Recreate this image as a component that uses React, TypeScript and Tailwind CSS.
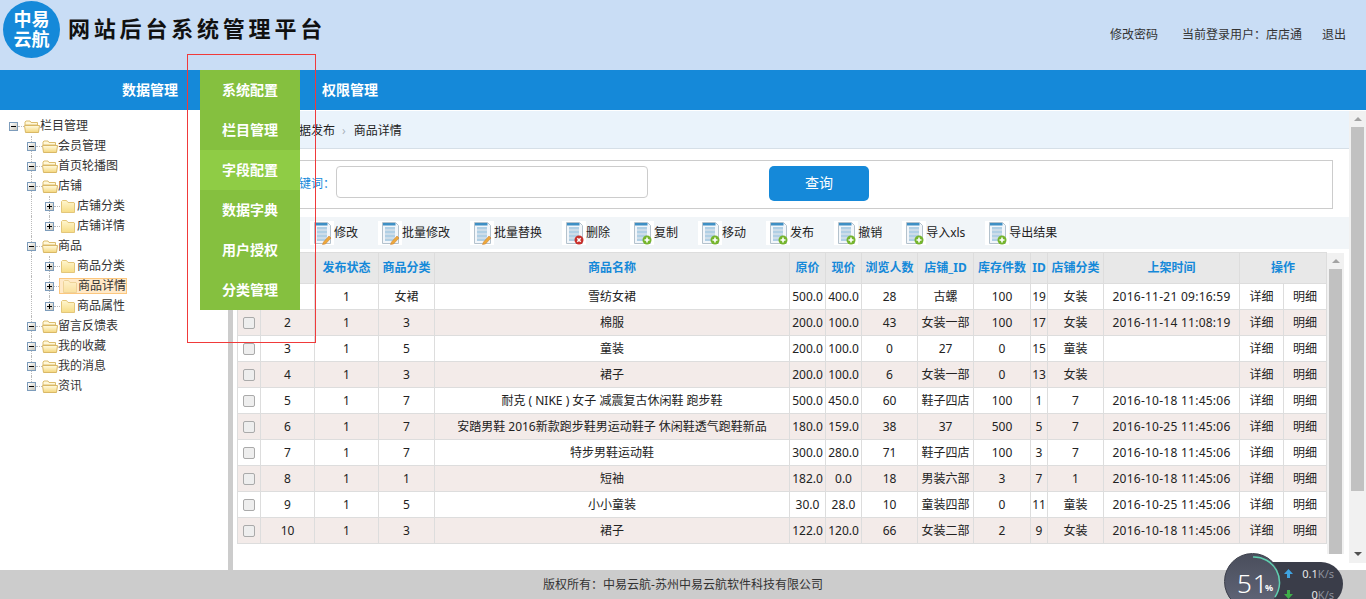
import React from "react";

const FONT = { fontFamily: '"Noto Sans", "Noto Sans CJK SC", sans-serif' };

interface ITreeNode {
  label: string;
  level: number;
  closed?: boolean;
  selected?: boolean;
  last?: boolean;
}

const tree: Array<ITreeNode> = [
  { label: "栏目管理", level: 0 },
  { label: "会员管理", level: 1 },
  { label: "首页轮播图", level: 1 },
  { label: "店铺", level: 1 },
  { label: "店铺分类", level: 2, closed: true },
  { label: "店铺详情", level: 2, closed: true, last: true },
  { label: "商品", level: 1 },
  { label: "商品分类", level: 2, closed: true },
  { label: "商品详情", level: 2, closed: true, selected: true },
  { label: "商品属性", level: 2, closed: true, last: true },
  { label: "留言反馈表", level: 1 },
  { label: "我的收藏", level: 1 },
  { label: "我的消息", level: 1 },
  { label: "资讯", level: 1, last: true },
];

const dropdown = ["系统配置", "栏目管理", "字段配置", "数据字典", "用户授权", "分类管理"];

const tools: Array<{ label: string; badge: "add" | "edit" | "del" }> = [
  { label: "新增", badge: "add" },
  { label: "修改", badge: "edit" },
  { label: "批量修改", badge: "edit" },
  { label: "批量替换", badge: "edit" },
  { label: "删除", badge: "del" },
  { label: "复制", badge: "add" },
  { label: "移动", badge: "add" },
  { label: "发布", badge: "add" },
  { label: "撤销", badge: "add" },
  { label: "导入xls", badge: "add" },
  { label: "导出结果", badge: "add" },
];

const headers = ["序号", "发布状态", "商品分类", "商品名称", "原价", "现价", "浏览人数", "店铺_ID", "库存件数", "ID", "店铺分类", "上架时间"];

const colWidths = ["w-[23px]", "w-[54px]", "w-[64px]", "w-[56px]", "w-[355px]", "w-[36px]", "w-[36px]", "w-[56px]", "w-[56px]", "w-[57px]", "w-[17px]", "w-[56px]", "w-[136px]", "w-[44px]", "w-[43px]"];

const rows = [
  ["1", "1", "女裙", "雪纺女裙", "500.0", "400.0", "28", "古螺", "100", "19", "女装", "2016-11-21 09:16:59"],
  ["2", "1", "3", "棉服", "200.0", "100.0", "43", "女装一部", "100", "17", "女装", "2016-11-14 11:08:19"],
  ["3", "1", "5", "童装", "200.0", "100.0", "0", "27", "0", "15", "童装", ""],
  ["4", "1", "3", "裙子", "200.0", "100.0", "6", "女装一部", "0", "13", "女装", ""],
  ["5", "1", "7", "耐克 ( NIKE ) 女子 减震复古休闲鞋 跑步鞋", "500.0", "450.0", "60", "鞋子四店", "100", "1", "7", "2016-10-18 11:45:06"],
  ["6", "1", "7", "安踏男鞋 2016新款跑步鞋男运动鞋子 休闲鞋透气跑鞋新品", "180.0", "159.0", "38", "37", "500", "5", "7", "2016-10-25 11:45:06"],
  ["7", "1", "7", "特步男鞋运动鞋", "300.0", "280.0", "71", "鞋子四店", "100", "3", "7", "2016-10-18 11:45:06"],
  ["8", "1", "1", "短袖", "182.0", "0.0", "18", "男装六部", "3", "7", "1", "2016-10-18 11:45:06"],
  ["9", "1", "5", "小小童装", "30.0", "28.0", "10", "童装四部", "0", "11", "童装", "2016-10-25 11:45:06"],
  ["10", "1", "3", "裙子", "122.0", "120.0", "66", "女装二部", "2", "9", "女装", "2016-10-18 11:45:06"],
];

const Toggle: React.FC<{ closed?: boolean }> = ({ closed }) => (
  <span className="relative flex size-[9px] shrink-0 items-center justify-center border border-[#7d9cbb] bg-gradient-to-br from-white to-[#c9c5b8]">
    <span className="h-px w-[5px] bg-black" />
    {closed && <span className="absolute h-[5px] w-px bg-black" />}
  </span>
);

const Folder: React.FC<{ closed?: boolean; pale?: boolean }> = ({ closed, pale }) =>
  closed ? (
    <svg width="14" height="13" viewBox="0 0 14 13" className={`shrink-0 ${pale ? "opacity-60" : ""}`}>
      <defs>
        <linearGradient id="fc" x1="0" y1="0" x2="0" y2="1">
          <stop offset="0" stopColor="#fff6cf" />
          <stop offset="1" stopColor="#f6dc85" />
        </linearGradient>
      </defs>
      <path d="M.5 12.5V1.5l1-1h4l1.5 2h6l.5.5v9.5z" fill="url(#fc)" stroke="#e3c67a" />
    </svg>
  ) : (
    <svg width="16" height="13" viewBox="0 0 16 13" className="shrink-0">
      <defs>
        <linearGradient id="fo" x1="0" y1="0" x2="0" y2="1">
          <stop offset="0" stopColor="#fffbe4" />
          <stop offset="1" stopColor="#f4d67a" />
        </linearGradient>
      </defs>
      <path d="M1 5V2l1-1h4l1 1.5h6.5V5z" fill="#fff8da" stroke="#dcbd6f" />
      <path d="M.5 5.5h15l-1 7h-13z" fill="url(#fo)" stroke="#d9b866" />
    </svg>
  );

const TreeRow: React.FC<ITreeNode> = ({ label, level, closed, selected, last }) => {
  const indent = level === 0 ? "pl-[9px]" : level === 1 ? "pl-[27px]" : "pl-[45px]";
  return (
    <div className={`relative flex h-5 items-center text-xs text-[#333] ${indent}`}>
      {level > 0 && (
        <span className={`absolute left-[31px] top-0 border-l border-dotted border-[#bbbbbb] ${level === 1 && last ? "h-[10px]" : "h-5"}`} />
      )}
      {level === 2 && (
        <span className={`absolute left-[49px] top-0 border-l border-dotted border-[#bbbbbb] ${last ? "h-[10px]" : "h-5"}`} />
      )}
      <span className="relative">
        <Toggle closed={closed} />
      </span>
      {selected ? (
        <>
          <span className="w-[5px] shrink-0 border-t border-dotted border-[#bbbbbb]" />
          <span className="flex h-4 items-center border border-[#fcc77f] bg-[#ffe9c8] pl-[3px]">
            <Folder closed pale />
            <span className="ml-px">{label}</span>
          </span>
        </>
      ) : (
        <>
          <span className="w-[6px] shrink-0 border-t border-dotted border-[#bbbbbb]" />
          <span className={`flex items-center ${closed ? "ml-px" : ""}`}>
            <Folder closed={closed} />
            <span className={closed ? "ml-[2px]" : ""}>{label}</span>
          </span>
        </>
      )}
    </div>
  );
};

const DocIcon: React.FC<{ badge: "add" | "edit" | "del" }> = ({ badge }) => (
  <svg width="24" height="24" viewBox="0 0 24 24" className="shrink-0 bg-white">
    <path d="M4.5 1.5h13l3 3v18h-16z" fill="#f2f6fa" stroke="#b4c2cd" />
    <path d="M5 2h12.5v2.5H5z" fill="#3e8fc4" />
    {[7, 9, 11, 13, 15, 17, 19].map((y) => (
      <path key={y} d={`M7 ${y}h10`} stroke={y % 4 === 1 ? "#a7c3d8" : "#6fa8cf"} strokeWidth="1" />
    ))}
    {badge === "edit" && <path d="M13.5 21l5.5-6 2 2-5.5 6-3 .5z" fill="#eda93b" stroke="#c9782a" strokeWidth=".5" />}
    {badge === "add" && (
      <>
        <circle cx="17" cy="19" r="4.5" fill="#75b52d" />
        <path d="M14.5 19h5M17 16.5v5" stroke="#fff" strokeWidth="1.6" />
      </>
    )}
    {badge === "del" && (
      <>
        <circle cx="17" cy="19" r="4.5" fill="#c8302c" />
        <path d="M15.3 17.3l3.4 3.4M18.7 17.3l-3.4 3.4" stroke="#fff" strokeWidth="1.5" />
      </>
    )}
  </svg>
);

const ScrollArrow: React.FC<{ down?: boolean }> = ({ down }) => (
  <div className="flex h-4 shrink-0 items-center justify-center">
    <span className={`size-0 border-x-[4px] border-x-transparent ${down ? "border-t-[4px] border-t-[#505050]" : "border-b-[4px] border-b-[#a3a3a3]"}`} />
  </div>
);

const NetWidget: React.FC = () => (
  <div className="absolute left-[1224px] top-[553px] h-[60px] w-[120px]">
    <div className="absolute left-[40px] top-[9px] flex h-[44px] w-[79px] flex-col rounded-r-[22px] bg-[#3a3d49] pl-[20px] pt-px text-[11px] leading-[21px]">
      <div className="flex items-center">
        <svg width="9" height="9" viewBox="0 0 9 9">
          <path d="M4.5 0L9 5H6v4H3V5H0z" fill="#3fa3e0" />
        </svg>
        <span className="ml-auto pr-[9px] text-[#e8e8e8]">
          0.1<span className="text-[#8c909b]">K/s</span>
        </span>
      </div>
      <div className="flex items-center">
        <svg width="9" height="9" viewBox="0 0 9 9">
          <path d="M4.5 9L0 4h3V0h3v4h3z" fill="#3fae49" />
        </svg>
        <span className="ml-auto pr-[9px] text-[#e8e8e8]">
          0<span className="text-[#8c909b]">K/s</span>
        </span>
      </div>
    </div>
    <div className="absolute left-0 top-0 size-[57px] rounded-full border border-[#3a3d49] bg-gradient-to-b from-[#4a4e5c] to-[#62677a]">
      <svg width="57" height="57" viewBox="0 0 57 57" className="absolute -left-px -top-px">
        <path d="M29 4a25.5 25.5 0 0 1 22 40" fill="none" stroke="#5fd0b0" strokeWidth="1.5" />
      </svg>
      <span className="absolute left-[12px] top-[13px] text-[26px] font-light leading-[32px] tracking-[1px] text-white">51</span>
      <span className="absolute left-[40px] top-[27px] text-[9px] font-bold leading-[14px] text-white">%</span>
    </div>
  </div>
);

export default function App(): React.JSX.Element {
  return (
    <div className="relative flex h-screen flex-col overflow-hidden bg-white text-xs text-[#222]" style={FONT}>
      <header className="flex h-[70px] shrink-0 items-center bg-[#c9ddf5] pl-[3px]">
        <div className="mt-[-12px] flex size-[57px] flex-col items-center justify-center rounded-full bg-[#1589d9] text-[18px] font-bold leading-[20px] text-white">
          <span>中易</span>
          <span>云航</span>
        </div>
        <h1 className="ml-2 mt-[-14px] whitespace-nowrap text-[22px] font-bold tracking-[3.8px] text-[#111]" style={{ fontFamily: '"Noto Sans CJK SC", serif' }}>
          网站后台系统管理平台
        </h1>
        <div className="ml-auto flex items-center pr-[20px] text-[#333]">
          <span>修改密码</span>
          <span className="ml-6">当前登录用户：店店通</span>
          <span className="ml-5">退出</span>
        </div>
      </header>

      <nav className="flex h-10 shrink-0 bg-[#1589d9] pl-[100px] text-sm font-bold text-white">
        <div className="flex w-[100px] items-center justify-center">数据管理</div>
        <div className="relative flex w-[100px] items-center justify-center">
          系统配置
          <ul className="absolute left-0 top-0 z-10 w-[100px] bg-[#85c03f]">
            {dropdown.map((item) => (
              <li key={item} className={`flex h-10 items-center justify-center ${item === "字段配置" ? "bg-[#8fcc45]" : ""}`}>
                {item}
              </li>
            ))}
          </ul>
        </div>
        <div className="flex w-[100px] items-center justify-center">权限管理</div>
      </nav>

      <div className="flex min-h-0 flex-1">
        <aside className="w-[228px] shrink-0 pt-[6px]">
          {tree.map((node) => (
            <TreeRow key={node.label} {...node} />
          ))}
        </aside>
        <div className="w-[5px] shrink-0 bg-[#cccccc]" />

        <main className="flex min-w-0 flex-1">
          <div className="min-w-0 flex-1">
            <div className="mt-px flex h-[38px] items-center gap-[7px] border-b border-[#d6dfe7] bg-[#eaf3fb] pl-[54px] pt-[2px]">
              <span>数据发布</span>
              <span className="text-[#aab4bc]">›</span>
              <span className="ml-px">商品详情</span>
            </div>

            <div className="ml-[7px] mr-[16px] mt-[11px] flex h-[49px] items-start border border-[#cccccc] pt-[5px]">
              <span className="ml-[46px] mt-[10px] text-[#1589d9]">关键词：</span>
              <input className="ml-px h-[32px] w-[312px] rounded-[4px] border border-[#cccccc] bg-white" />
              <button className="ml-[121px] h-[35px] w-[100px] rounded-[5px] bg-[#1589d9] pb-[2px] text-sm text-white">查询</button>
            </div>

            <div className="ml-[7px] mt-[8px] flex h-[32px] items-center gap-[20px] bg-[#f1f5f8] pl-[2px]">
              {tools.map((tool) => (
                <span key={tool.label} className="flex items-center">
                  <DocIcon badge={tool.badge} />
                  {tool.label}
                </span>
              ))}
            </div>

            <div className="ml-[4px] mt-[3px] flex items-start">
              <table className="w-[1089px] table-fixed border-collapse text-center">
                <colgroup>
                  {colWidths.map((w, index) => (
                    <col key={index} className={w} />
                  ))}
                </colgroup>
                <thead>
                  <tr className="h-[31px] bg-[#e8e8e8] font-bold text-[#1589d9]">
                    <th className="border border-[#dddddd]" />
                    {headers.map((h) => (
                      <th key={h} className="overflow-hidden whitespace-nowrap border border-[#dddddd] font-bold">
                        {h}
                      </th>
                    ))}
                    <th colSpan={2} className="border border-[#dddddd] font-bold">
                      操作
                    </th>
                  </tr>
                </thead>
                <tbody>
                  {rows.map((row, i) => (
                    <tr key={row[0]} className={`h-[26px] ${i % 2 ? "bg-[#f3ebe9]" : "bg-white"}`}>
                      <td className="border border-[#dddddd]">
                        <input type="checkbox" className="mx-auto block size-[12px] appearance-none rounded-[2px] border border-[#aaaaaa] bg-[#eeeeee]" />
                      </td>
                      {row.map((cell, j) => (
                        <td key={j} className={`overflow-hidden whitespace-nowrap border border-[#dddddd] ${j === 11 ? "tracking-[0.25px]" : ""}`}>
                          {cell}
                        </td>
                      ))}
                      <td className="border border-[#dddddd]">详细</td>
                      <td className="border border-[#dddddd]">明细</td>
                    </tr>
                  ))}
                </tbody>
              </table>
              <div className="mt-px flex h-[301px] w-[17px] shrink-0 flex-col bg-[#f1f1f1]">
                <ScrollArrow />
                <div className="ml-[2px] w-[13px] flex-1 bg-[#c1c1c1]" />
              </div>
            </div>
          </div>

          <div className="mb-[7px] mt-px flex w-[17px] shrink-0 flex-col bg-[#f1f1f1]">
            <ScrollArrow />
            <div className="ml-[2px] h-[364px] w-[13px] bg-[#c1c1c1]" />
            <div className="mt-auto mb-[1px]">
              <ScrollArrow down />
            </div>
          </div>
        </main>
      </div>

      <footer className="flex h-[29px] shrink-0 items-center justify-center bg-[#cccccc] text-[#333]">
        版权所有：中易云航-苏州中易云航软件科技有限公司
      </footer>

      <div className="pointer-events-none absolute left-[187px] top-[54px] z-20 h-[289px] w-[129px] border border-[#f03a3a]" />
      <NetWidget />
    </div>
  );
}
